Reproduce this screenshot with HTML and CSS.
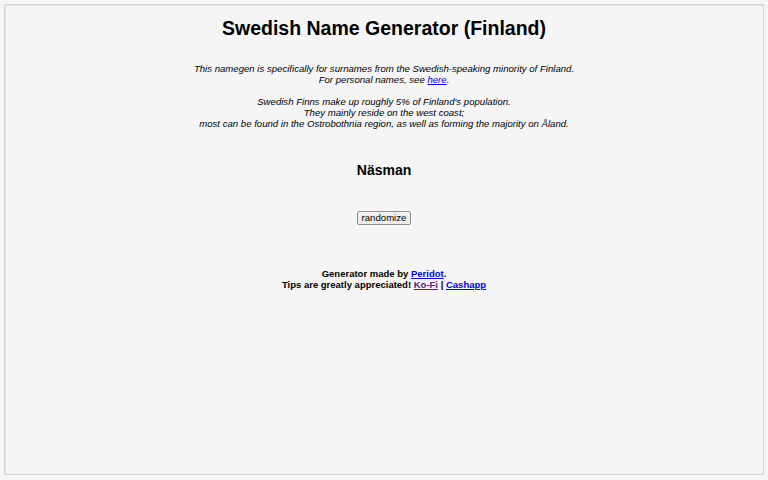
FILE: index.html
```html
<!DOCTYPE html>
<html lang="en">
<head>
<meta charset="utf-8">
<title>Swedish Name Generator (Finland)</title>
<link rel="stylesheet" href="styles.css">
</head>
<body>
<div class="page">
  <h1 class="title">Swedish Name Generator (Finland)</h1>
  <div class="intro">
    <p>This namegen is specifically for surnames from the Swedish-speaking minority of Finland.<br>
    For personal names, see <a href="#">here</a>.</p>
    <p>Swedish Finns make up roughly 5% of Finland's population.<br>
    They mainly reside on the west coast;<br>
    most can be found in the Ostrobothnia region, as well as forming the majority on Åland.</p>
  </div>
  <h2 class="result">Näsman</h2>
  <div class="actions"><button class="btn" type="button">randomize</button></div>
  <div class="credits">
    Generator made by <a href="#">Peridot</a>.<br>
    Tips are greatly appreciated! <a href="#" class="visited">Ko-Fi</a> | <a href="#">Cashapp</a>
  </div>
</div>
</body>
</html>
```

FILE: styles.css
```css
html, body {
  margin: 0;
  padding: 0;
  background: #f5f5f5;
}

body {
  font-family: "Liberation Sans", Arial, sans-serif;
  color: #000;
  padding: 4px;
  height: 480px;
  box-sizing: border-box;
}

.page {
  border: 1px solid #d2d2d2;
  box-shadow: inset 1px 1px 0 #e4e4e4;
  height: 471px;
  box-sizing: border-box;
  text-align: center;
}

.title {
  font-size: 19.5px;
  font-weight: bold;
  margin: 0;
  padding-top: 11px;
  line-height: 24px;
}

.intro {
  font-style: italic;
  font-size: 9.6px;
  line-height: 11px;
  margin-top: 23px;
}

.intro p {
  margin: 0 0 11px;
}

.intro p + p {
  margin-top: -0.5px;
}

a {
  color: #0000ee;
}

a.visited {
  color: #551a8b;
}

.result {
  font-size: 14px;
  font-weight: bold;
  margin: 32px 0 0;
  line-height: 18px;
}

.actions {
  margin-top: 32px;
  display: flex;
  justify-content: center;
}

.btn {
  font-family: "Liberation Sans", Arial, sans-serif;
  font-size: 9.6px;
  padding: 0 4px;
  height: 14px;
  box-sizing: border-box;
  background: #efefef;
  border: 1px solid #8f8f8f;
  border-radius: 2px;
  color: #000;
  line-height: 12px;
}

.credits {
  margin-top: 43px;
  font-size: 9.5px;
  font-weight: bold;
  line-height: 11px;
}
```
